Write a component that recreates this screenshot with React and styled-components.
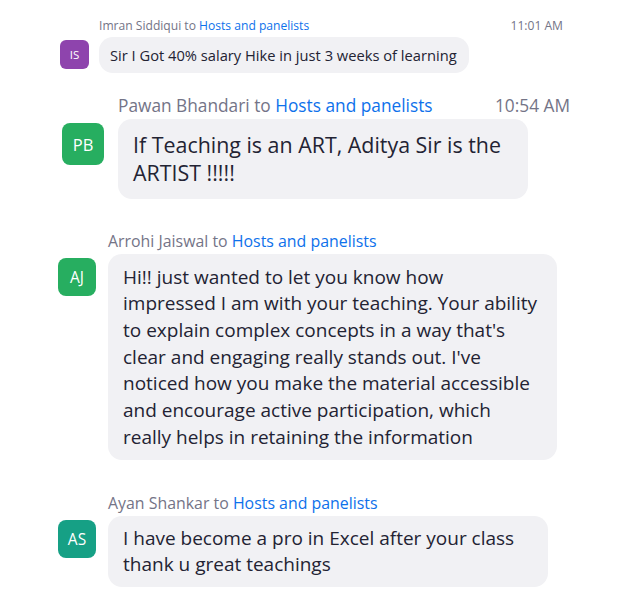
import styled, { createGlobalStyle } from 'styled-components';

const GlobalStyle = createGlobalStyle`
  html, body {
    margin: 0;
    padding: 0;
    background: #ffffff;
  }
  body {
    font-family: "Open Sans", "Noto Sans", sans-serif;
    -webkit-font-smoothing: antialiased;
  }
`

// sizes per message, the screenshot mixes several zoom levels
const small = { top: 18, left: 60, right: 58, avatar: 29, gap: 10, radius: 6, head: 12.1, headLine: 16, headGap: 3, body: 14.7, bodyLine: 20, padT: 8, padR: 12, padL: 11, initials: 11.5, avatarTop: 3 }
const large = { top: 22, left: 62, right: 51, avatar: 42, gap: 14, radius: 8, head: 17.3, headLine: 22, headGap: 2, body: 21.4, bodyLine: 28, padT: 12, padR: 20, padL: 15, bubbleWidth: 410, initials: 16.5, avatarTop: 4 }
const medium = { top: 32, left: 58, right: 20, avatar: 38, gap: 12, radius: 8, head: 15.9, headLine: 20, headGap: 3, body: 19, bodyLine: 26.7, padT: 9.5, padR: 18, padL: 15, bubbleWidth: 449, initials: 15.5, avatarTop: 4 }

const messages = [
  {
    id: 1,
    name: 'Imran Siddiqui',
    initials: 'IS',
    color: '#8e44ad',
    time: '11:01 AM',
    text: 'Sir I Got 40% salary Hike in just 3 weeks of learning',
    s: small,
  },
  {
    id: 2,
    name: 'Pawan Bhandari',
    initials: 'PB',
    color: '#27ae60',
    time: '10:54 AM',
    text: 'If Teaching is an ART, Aditya Sir is the ARTIST !!!!!',
    s: large,
  },
  {
    id: 3,
    name: 'Arrohi Jaiswal',
    initials: 'AJ',
    color: '#27ae60',
    text: "Hi!! just wanted to let you know how impressed I am with your teaching. Your ability to explain complex concepts in a way that's clear and engaging really stands out. I've noticed how you make the material accessible and encourage active participation, which really helps in retaining the information",
    s: medium,
  },
  {
    id: 4,
    name: 'Ayan Shankar',
    initials: 'AS',
    color: '#16a085',
    text: 'I have become a pro in Excel after your class thank u great teachings',
    s: { ...medium, top: 33, bubbleWidth: 440, padT: 8.8 },
  },
]

const ChatApp = () => {
  return (
    <Feed>
      <GlobalStyle />
      {messages.map((m) => (
        <Message key={m.id} $s={m.s}>
          <Header $s={m.s}>
            <Sender>
              {m.name} to <Recipient>Hosts and panelists</Recipient>
            </Sender>
            {m.time && <Time>{m.time}</Time>}
          </Header>
          <Avatar $s={m.s} $color={m.color}>{m.initials}</Avatar>
          <Bubble $s={m.s}>{m.text}</Bubble>
        </Message>
      ))}
    </Feed>
  )
}

const Feed = styled.div`
  width: 621px;
  min-height: 601px;
  display: flex;
  flex-direction: column;
  padding-bottom: 14px;
  box-sizing: border-box;
`

const Message = styled.div`
  display: grid;
  grid-template-columns: ${(p) => p.$s.avatar}px 1fr;
  column-gap: ${(p) => p.$s.gap}px;
  row-gap: ${(p) => p.$s.headGap}px;
  margin-top: ${(p) => p.$s.top}px;
  padding-left: ${(p) => p.$s.left}px;
  padding-right: ${(p) => p.$s.right}px;
  align-items: start;
`

const Header = styled.div`
  grid-column: 2;
  display: flex;
  justify-content: space-between;
  align-items: center;
  font-size: ${(p) => p.$s.head}px;
  line-height: ${(p) => p.$s.headLine}px;
  color: #747487;
  white-space: nowrap;
`

const Sender = styled.span``

const Recipient = styled.span`
  color: #0e71eb;
`

const Time = styled.span`
  color: #747487;
`

const Avatar = styled.div`
  grid-column: 1;
  grid-row: 2;
  width: ${(p) => p.$s.avatar}px;
  height: ${(p) => p.$s.avatar}px;
  margin-top: ${(p) => p.$s.avatarTop}px;
  border-radius: ${(p) => p.$s.radius}px;
  background: ${(p) => p.$color};
  color: #ffffff;
  font-size: ${(p) => p.$s.initials}px;
  display: flex;
  align-items: center;
  justify-content: center;
`

const Bubble = styled.div`
  grid-column: 2;
  grid-row: 2;
  justify-self: start;
  box-sizing: border-box;
  width: ${(p) => (p.$s.bubbleWidth ? `${p.$s.bubbleWidth}px` : 'auto')};
  padding: ${(p) => p.$s.padT}px ${(p) => p.$s.padR}px ${(p) => p.$s.padT}px ${(p) => p.$s.padL}px;
  border-radius: 14px;
  background: #f1f1f4;
  color: #232333;
  font-size: ${(p) => p.$s.body}px;
  line-height: ${(p) => p.$s.bodyLine}px;
`

export default ChatApp
